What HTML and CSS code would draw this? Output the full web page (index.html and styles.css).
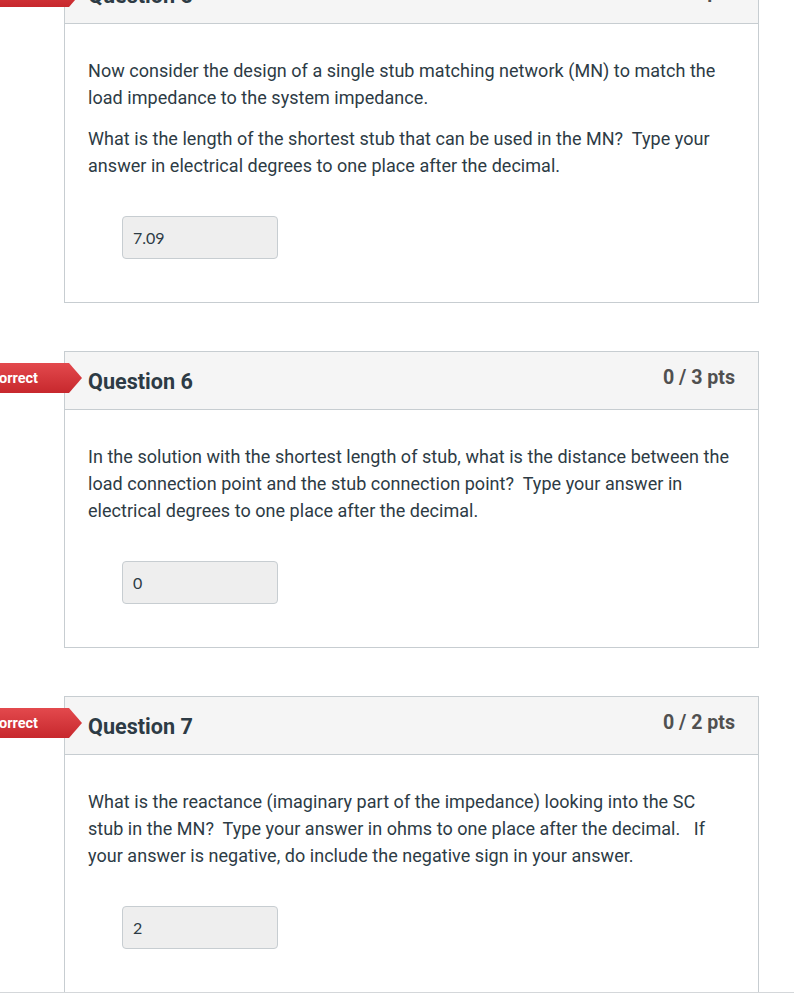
FILE: index.html
```html
<!DOCTYPE html>
<html lang="en">
<head>
<meta charset="utf-8">
<title>Quiz results</title>
<link rel="stylesheet" href="styles.css">
</head>
<body>
<div class="viewport">
  <div class="page">
    <div class="question">
      <div class="badge">Incorrect</div>
      <div class="q-header">
        <span class="q-title">Question 5</span>
        <span class="q-pts">0 / 3 pts</span>
      </div>
      <div class="q-body">
        <p>Now consider the design of a single stub matching network (MN) to match the load impedance to the system impedance.</p>
        <p>What is the length of the shortest stub that can be used in the MN?&nbsp; Type your answer in electrical degrees to one place after the decimal.</p>
        <div class="answer"><input class="answer-input" type="text" value="7.09" readonly></div>
      </div>
    </div>

    <div class="question">
      <div class="badge">Incorrect</div>
      <div class="q-header">
        <span class="q-title">Question 6</span>
        <span class="q-pts">0 / 3 pts</span>
      </div>
      <div class="q-body">
        <p>In the solution with the shortest length of stub, what is the distance between the load connection point and the stub connection point?&nbsp; Type your answer in electrical degrees to one place after the decimal.</p>
        <div class="answer"><input class="answer-input" type="text" value="0" readonly></div>
      </div>
    </div>

    <div class="question">
      <div class="badge">Incorrect</div>
      <div class="q-header">
        <span class="q-title">Question 7</span>
        <span class="q-pts">0 / 2 pts</span>
      </div>
      <div class="q-body">
        <p>What is the reactance (imaginary part of the impedance) looking into the SC stub in the MN?&nbsp; Type your answer in ohms to one place after the decimal.&nbsp;&nbsp; If your answer is negative, do include the negative sign in your answer.</p>
        <div class="answer"><input class="answer-input" type="text" value="2" readonly></div>
      </div>
    </div>
  </div>
</div>
</body>
</html>
```

FILE: styles.css
```css
html, body {
  margin: 0;
  padding: 0;
  background: #ffffff;
}

body {
  font-family: Roboto, "Liberation Sans", Arial, sans-serif;
  color: #2d3b45;
}

.viewport {
  height: 992px;
  overflow: hidden;
  border-bottom: 1px solid #d4d7da;
}

.page {
  margin-top: -35px;
  padding-left: 64px;
  padding-right: 35px;
}

.question {
  position: relative;
  border: 1px solid #c7cdd1;
  margin-bottom: 48px;
  background: #ffffff;
}

.q-header {
  height: 57px;
  background: #f5f5f5;
  border-bottom: 1px solid #c7cdd1;
  display: flex;
  align-items: center;
  justify-content: space-between;
  padding: 0 23px;
}

.q-title {
  font-size: 21.6px;
  font-weight: 700;
  color: #2d3b45;
  padding-top: 1px;
}

.q-pts {
  font-size: 19.6px;
  font-weight: 700;
  color: #505050;
  margin-top: -6px;
}

.q-body {
  padding: 33px 23px 43px 23px;
}

.q-body p {
  margin: 0 0 14px 0;
  font-size: 18px;
  letter-spacing: 0.04px;
  line-height: 27px;
}

.q-body p:last-of-type {
  margin-bottom: 0;
}

.answer {
  margin-top: 37px;
  padding-left: 34px;
}

.answer-input {
  box-sizing: border-box;
  width: 156px;
  height: 43px;
  margin: 0;
  padding: 0 10px;
  background: #eeeeee;
  border: 1px solid #c7cdd1;
  border-radius: 4px;
  font-family: Lato, "Liberation Sans", sans-serif;
  font-size: 16px;
  color: #2d3b45;
  outline: none;
  display: block;
}

.badge {
  position: absolute;
  top: 11px;
  left: -105px;
  width: 122px;
  height: 30px;
  box-sizing: border-box;
  padding-right: 44px;
  display: flex;
  align-items: center;
  justify-content: flex-end;
  background: linear-gradient(#e3494d, #c7282d);
  color: #ffffff;
  font-size: 14.5px;
  font-weight: 700;
  clip-path: polygon(0 0, calc(100% - 13px) 0, 100% 50%, calc(100% - 13px) 100%, 0 100%);
  z-index: 2;
}
```
